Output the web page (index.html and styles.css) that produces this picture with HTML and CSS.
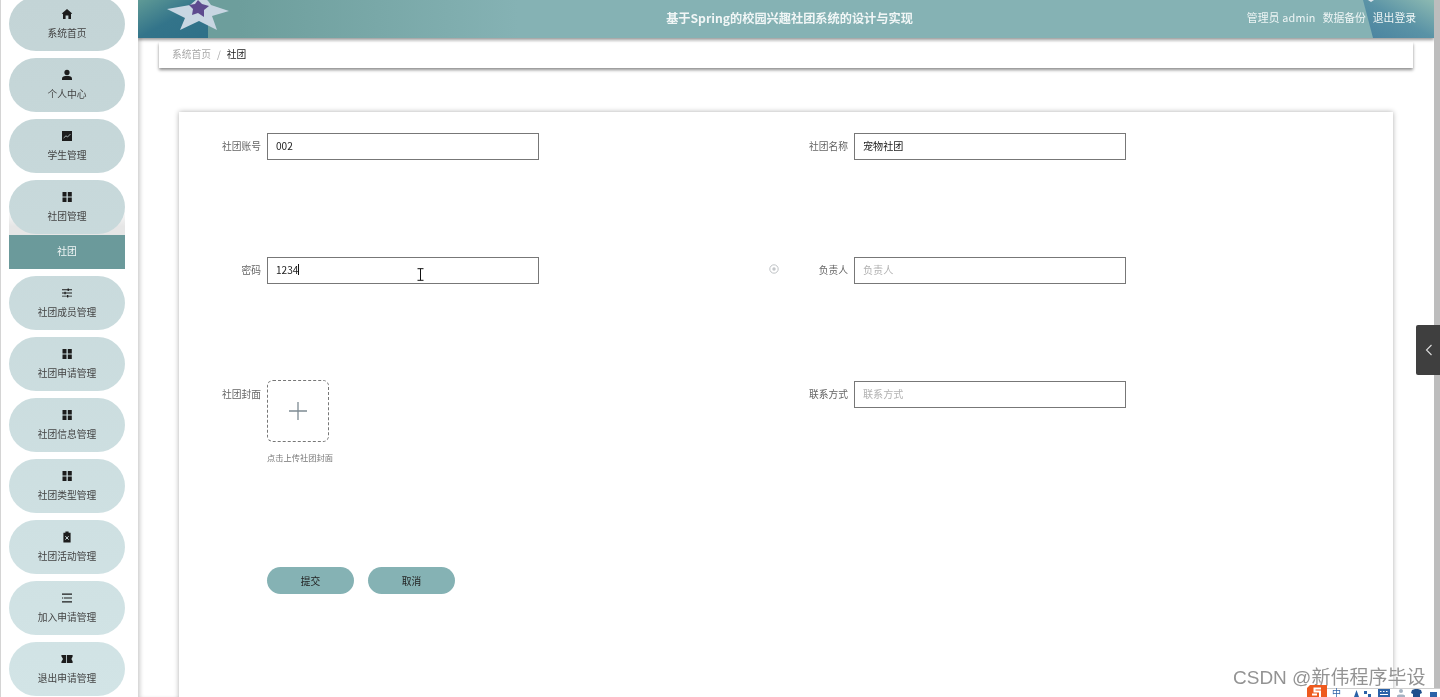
FILE: index.html
```html
<!DOCTYPE html>
<html lang="zh-CN">
<head>
<meta charset="utf-8">
<title>基于Spring的校园兴趣社团系统的设计与实现</title>
<link rel="stylesheet" href="styles.css">
</head>
<body>
<svg class="defs" width="0" height="0" aria-hidden="true">
  <symbol id="i-home" viewBox="0 0 12 12"><path d="M6 1 11.2 5.6 10 5.9V11H7.4V7.6H4.6V11H2V5.9L.8 5.6Z"/></symbol>
  <symbol id="i-user" viewBox="0 0 12 12"><circle cx="6" cy="3.4" r="2.6"/><path d="M1 11V9.4C1 7.6 3.2 6.8 6 6.8s5 .8 5 2.6V11Z"/></symbol>
  <symbol id="i-chart" viewBox="0 0 12 12"><path d="M1 1h10v10H1Z"/><path d="M2.6 8 5 5.8l1.5 1.2 3-3" fill="none" stroke="#c5d5d7" stroke-width=".8"/></symbol>
  <symbol id="i-grid" viewBox="0 0 12 12"><path d="M1.5 1h4v4.4h-4ZM6.8 1h4v4.4h-4ZM1.5 6.600h4V11h-4ZM6.800 6.600h4V11h-4Z"/></symbol>
  <symbol id="i-sliders" viewBox="0 0 12 12"><path d="M1 2.300h10v.9H1ZM1 5.500h10v.9H1ZM1 8.700h10v.9H1Z"/><path d="M6.600 1.400h1.300v2.600H6.600ZM3.400 4.700h1.300v2.600H3.400ZM6 7.900h1.300v2.600H6Z"/></symbol>
  <symbol id="i-clip" viewBox="0 0 12 12"><path d="M4.400.6h3.200v1.200h2V11.600H2.400V1.800h2Z"/><path d="m4.400 5.200 3.200 3.400m0-3.400-3.200 3.400" stroke="#cfe0e2" stroke-width="1" fill="none"/></symbol>
  <symbol id="i-list" viewBox="0 0 12 12"><path d="M1 1.600h10v1.200H1ZM3 5.400h8v1.200H3ZM1 5.400h1.200v1.200H1ZM1 9.200h10v1.200H1Z"/></symbol>
  <symbol id="i-ticket" viewBox="0 0 12 12"><path d="M.4 2h11.200v1.800L10.400 6l1.200 2.200V10H.4V8.800L2 6 .4 3.200ZM5 2v8h.8V2Z"/></symbol>
</svg>

<div class="app">
  <aside class="sidebar">
    <nav class="menu">
      <a class="pill"><svg class="ico"><use href="#i-home"/></svg><span>系统首页</span></a>
      <a class="pill"><svg class="ico"><use href="#i-user"/></svg><span>个人中心</span></a>
      <a class="pill"><svg class="ico"><use href="#i-chart"/></svg><span>学生管理</span></a>
      <div class="group">
        <a class="pill"><svg class="ico"><use href="#i-grid"/></svg><span>社团管理</span></a>
        <a class="subitem">社团</a>
      </div>
      <a class="pill"><svg class="ico"><use href="#i-sliders"/></svg><span>社团成员管理</span></a>
      <a class="pill"><svg class="ico"><use href="#i-grid"/></svg><span>社团申请管理</span></a>
      <a class="pill"><svg class="ico"><use href="#i-grid"/></svg><span>社团信息管理</span></a>
      <a class="pill"><svg class="ico"><use href="#i-grid"/></svg><span>社团类型管理</span></a>
      <a class="pill"><svg class="ico"><use href="#i-clip"/></svg><span>社团活动管理</span></a>
      <a class="pill"><svg class="ico"><use href="#i-list"/></svg><span>加入申请管理</span></a>
      <a class="pill"><svg class="ico"><use href="#i-ticket"/></svg><span>退出申请管理</span></a>
    </nav>
  </aside>

  <div class="main">
    <header class="topbar">
      <svg class="art art-left" viewBox="0 0 100 38" preserveAspectRatio="none" aria-hidden="true">
        <defs>
          <linearGradient id="tealDeep" x1="0" y1="0" x2="1" y2="1">
            <stop offset="0" stop-color="#5f9a96"/><stop offset=".5" stop-color="#33748a"/><stop offset="1" stop-color="#2f7088"/>
          </linearGradient>
        </defs>
        <path d="M0 0H70V38H0Z" fill="url(#tealDeep)"/>
        <path d="M65 -6 73 5 91 11 74 16 79 30 61 21 42 30 47 18 29 9 52 5Z" fill="#c8d6e2"/>
        <path d="M60 0 64 4 71 6 66 10 66 17 60 13 54 15 55 9 51 5 57 4Z" fill="#5d4a8e"/>
      </svg>
      <h1 class="title">基于Spring的校园兴趣社团系统的设计与实现</h1>
      <svg class="art art-right" viewBox="0 0 71 38" preserveAspectRatio="none" aria-hidden="true">
        <defs>
          <linearGradient id="tealRight" x1="0" y1="1" x2="1" y2="0">
            <stop offset="0" stop-color="#4a83a0"/><stop offset=".5" stop-color="#5a93a6"/><stop offset="1" stop-color="#8dbab2"/>
          </linearGradient>
        </defs>
        <path d="M0 0H71V38H10Z" fill="url(#tealRight)"/>
        <path d="M5 0H11L8 2Z" fill="#dfe8ee"/>
      </svg>
      <div class="userbar"><span class="who">管理员 admin</span><a>数据备份</a><a>退出登录</a></div>
    </header>

    <div class="crumbs"><span class="crumb-home">系统首页</span><span class="crumb-sep">/</span><span class="crumb-now">社团</span></div>

    <section class="card">
      <form class="form">
        <div class="field"><label>社团账号</label><input class="input" value="002"></div>
        <div class="field"><label>社团名称</label><input class="input" value="宠物社团"></div>
        <div class="field"><label>密码</label><div class="input filled">1234<i class="caret"></i></div></div>
        <div class="field"><label>负责人</label><input class="input" placeholder="负责人"></div>
        <div class="field upload-field">
          <label>社团封面</label>
          <div>
            <div class="upload"><svg width="20" height="20" viewBox="0 0 20 20"><path d="M10 1v18M1 10h18" stroke="#7d8a92" stroke-width="1.300" fill="none"/></svg></div>
            <p class="hint">点击上传社团封面</p>
          </div>
        </div>
        <div class="field contact-field"><label>联系方式</label><input class="input" placeholder="联系方式"></div>
      </form>
      <div class="actions"><button type="button">提交</button><button type="button">取消</button></div>
      <svg class="clear" width="10" height="10" viewBox="0 0 10 10" aria-hidden="true"><circle cx="5" cy="5" r="4.200" fill="none" stroke="#b9bcc0" stroke-width=".9"/><circle cx="5" cy="5" r="1.700" fill="#c4c7ca"/></svg>
      <svg class="ibeam" width="7" height="13" viewBox="0 0 7 13" aria-hidden="true"><path d="M.5.700H6.500M3.500.700V12.300M.5 12.300H6.500" stroke="#111" fill="none"/></svg>
    </section>
  </div>
  <div class="scrollbar"></div>
</div>

<button class="tab" type="button" aria-label="展开"><svg width="8" height="12" viewBox="0 0 8 12"><path d="M6.500 1 1.500 6l5 5" fill="none" stroke="#ddd" stroke-width="1.100"/></svg></button>
<div class="watermark">CSDN @新伟程序毕设</div>
<div class="tray">
  <svg class="sogou" width="20" height="12" viewBox="0 0 20 12" aria-hidden="true"><path d="M3 0H20V12H0V3Z" fill="#ee5a1e"/><path d="M14 3.500H7.500V6.500H13V12M5 9.500H10" fill="none" stroke="#fff" stroke-width="2"/></svg>
  <span class="tray-zh">中</span>
  <svg class="tray-icons" width="90" height="8" viewBox="0 0 90 8" aria-hidden="true"><path d="M1 8 3.500 1 6 8ZM11 2h3v3h-3ZM15 5h3v3h-3Z" fill="#2b62a8"/><path d="M25 0h12v8H25Z" fill="#2b62a8"/><path d="M27 2h1.500v1H27ZM30 2h1.500v1H30ZM33 2h1.500v1H33ZM27 5h8v1h-8Z" fill="#fff"/><path d="M48 0a2 2 0 1 1 0 4 2 2 0 0 1 0-4ZM44 8V6.500C44 5 52 5 52 6.500V8Z" fill="#a5b3c2"/><path d="M59 1 62 0h3l3 1 1 3-2 1v3h-7V5l-2-1Z" fill="#1f4f8c"/><path d="M77 3h7v5h-7Z" fill="#2b62a8"/></svg>
</div>
</body>
</html>
```
FILE: styles.css
```css
* { box-sizing: border-box; }
html, body { height: 100%; margin: 0; overflow: hidden; }
body {
  background: #fff;
  color: #333;
  font-family: "Noto Sans CJK SC", "Noto Sans", sans-serif;
  font-size: 9.75px;
}
a { color: inherit; text-decoration: none; }
.defs { position: absolute; }

.app { display: flex; height: 697px; filter: blur(.3px); }

/* Sidebar */
.sidebar {
  flex: 0 0 138px;
  height: 697px;
  overflow: hidden;
  border-left: 1px solid #d4d4d4;
  padding-left: 8px;
}
.menu { display: flex; flex-direction: column; gap: 7px; margin-top: -3px; width: 116px; }
.pill {
  display: flex;
  flex-direction: column;
  align-items: center;
  height: 54px;
  flex: none;
  padding-top: 11px;
  border-radius: 27px;
  background: linear-gradient(#c3d4d6, #d2e4e6) fixed;
  color: #444;
  line-height: 14px;
}
.ico { width: 12px; height: 12px; fill: #1c1c1c; margin-bottom: 6px; flex: none; }
.group {
  display: flex;
  flex-direction: column;
  background: linear-gradient(#fff 28px, #e6e6e6 46px);
}
.subitem {
  height: 34px;
  margin-top: 1px;
  background: #6b9a9b;
  color: #f2f6f6;
  text-align: center;
  line-height: 32px;
}

/* Main */
.main {
  position: relative;
  flex: 1;
  min-width: 0;
  height: 697px;
  overflow: hidden;
  box-shadow: inset 4px 0 4px -2px #ccc;
}
.topbar {
  position: relative;
  display: flex;
  align-items: center;
  justify-content: center;
  height: 38px;
  background: linear-gradient(90deg, #6d9e9c 100px, #85b2b4 380px);
  box-shadow: 0 2px 3px rgba(0, 0, 0, .4);
}
.art { position: absolute; top: 0; height: 38px; }
.art-left { left: 0; width: 100px; }
.art-right { right: 0; width: 71px; }
.title {
  position: relative;
  margin: 0 0 3px 7px;
  font-size: 12.200px;
  font-weight: 700;
  color: #f1f6f6;
}
.userbar {
  position: absolute;
  right: 18px;
  top: 10px;
  display: flex;
  gap: 7px;
  color: #eef5f5;
  font-size: 10.800px;
  line-height: 14px;
}
.who { letter-spacing: .2px; }

.crumbs {
  display: flex;
  align-items: center;
  height: 26px;
  margin: 4px 21px 0;
  padding: 0 0 2px 13px;
  background: #fff;
  box-shadow: 0 2px 3px rgba(0, 0, 0, .45);
}
.crumb-home { color: #a8a8a8; }
.crumb-sep { margin: 0 6px; color: #a8a8a8; }
.crumb-now { color: #222; }

.card {
  position: relative;
  margin: 44px 41px 0;
  height: 620px;
  padding-top: 21px;
  background: #fff;
  box-shadow: 0 0 5px rgba(0, 0, 0, .32);
}
.form { display: grid; grid-template-columns: 587px 1fr; grid-auto-rows: 124px; }
.field { display: flex; align-items: flex-start; gap: 6px; }
.field label {
  flex: 0 0 82px;
  line-height: 27px;
  text-align: right;
  color: #666;
}
.input {
  width: 272px;
  height: 27px;
  padding: 0 8px 2px;
  border: 1px solid #777;
  border-radius: 0;
  outline: none;
  background: #fff;
  color: #222;
  font: inherit;
  font-size: 10.100px;
}
.input::placeholder { color: #b2b2b2; opacity: 1; }
.filled { display: flex; align-items: center; }
.caret { width: 1px; height: 11px; background: #111; }
.upload-field { margin-top: -1px; }
.upload-field label { padding-top: 1px; }
.upload {
  display: flex;
  align-items: center;
  justify-content: center;
  width: 62px;
  height: 62px;
  border: 1px dashed #777;
  border-radius: 6px;
}
.hint { margin: 9px 0 0; font-size: 8.250px; line-height: 12px; color: #777; white-space: nowrap; }

.actions { display: flex; gap: 14px; margin: 62px 0 0 88px; }
.actions button {
  width: 87px;
  height: 27px;
  padding: 0;
  border: 0;
  border-radius: 14px;
  background: #85b2b4;
  color: #222;
  font: inherit;
}
.clear { position: absolute; left: 590px; top: 152px; }
.ibeam { position: absolute; left: 238px; top: 156px; }

.scrollbar { flex: 0 0 6px; height: 697px; background: #bdbdbd; }

/* Floating */
.tab {
  position: fixed;
  right: 0;
  top: 325px;
  display: flex;
  align-items: center;
  padding: 0 0 0 9px;
  width: 24px;
  height: 50px;
  border: 0;
  border-radius: 2px 0 0 2px;
  background: #3f3f3f;
}
.watermark {
  position: fixed;
  left: 1233px;
  top: 668px;
  font-family: "Liberation Sans", "Noto Sans CJK SC", sans-serif;
  font-size: 19px;
  line-height: 20px;
  color: #939393;
  white-space: nowrap;
}
.tray {
  position: fixed;
  left: 1307px;
  top: 688px;
  right: 0;
  height: 9px;
  display: flex;
  align-items: flex-start;
  gap: 5px;
  background: linear-gradient(#cfcfcf 1px, #fff 1px) no-repeat 18px 0;
}
.sogou { margin-top: -3px; flex: none; }
.tray-zh { color: #2b62a8; font-size: 9px; line-height: 9px; flex: none; margin-right: 7px; }
.tray-icons { margin-top: 1px; flex: none; }
```
